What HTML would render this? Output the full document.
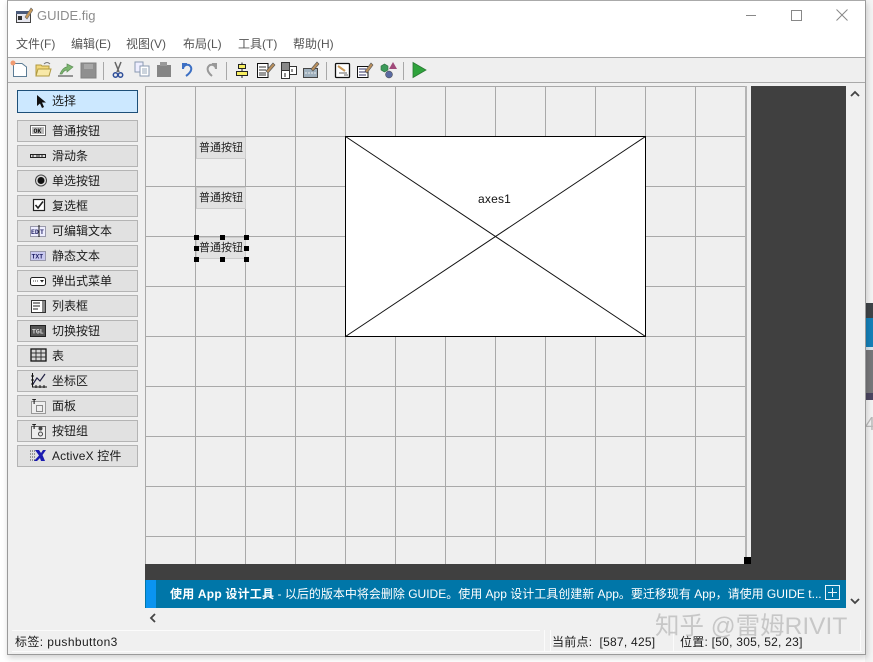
<!DOCTYPE html>
<html><head><meta charset="utf-8">
<style>
html,body{margin:0;padding:0;background:#fff}
body{width:873px;height:662px;position:relative;overflow:hidden;font-family:"Liberation Sans","Noto Sans CJK SC",sans-serif;color:#1c1c1c}
.a{position:absolute}
.t{position:absolute;white-space:nowrap;font-size:12px;line-height:16px}
.btn{position:absolute;left:17px;width:119px;height:20px;background:#e1e1e1;border:1px solid #b4b4b4;font-size:12px;line-height:20px;white-space:nowrap}
.btn span{position:absolute;left:34px;top:0}
.btn svg{position:absolute;left:12px;top:1px}
svg{display:block}
.pb{position:absolute;left:196px;width:48px;height:20px;background:#e2e2e2;border:1px solid #cdcdcd;font-size:11px;line-height:20px;text-align:center;white-space:nowrap;color:#222}
.h{position:absolute;width:5px;height:5px;background:#000}
</style></head><body>
<div class="a" style="left:0;top:0;width:873px;height:662px;background:#fff"></div>
<div class="a" style="left:865px;top:0;width:8px;height:662px;background:#f4f4f4"></div>
<div class="a" style="left:865px;top:303px;width:8px;height:15px;background:#3f4448"></div>
<div class="a" style="left:865px;top:318px;width:8px;height:29px;background:#1580b8"></div>
<div class="a" style="left:865px;top:347px;width:8px;height:3px;background:#d9e6ee"></div>
<div class="a" style="left:865px;top:350px;width:8px;height:43px;background:#77777a"></div>
<div class="a" style="left:865px;top:393px;width:8px;height:7px;background:#4b4560"></div>
<div class="t" style="left:865px;top:414px;font-size:18px;line-height:20px;color:#bbb">4</div>

<!-- window -->
<div class="a" style="left:7px;top:0;width:857px;height:653px;background:#f0f0f0;border:1px solid #9a9a9a;border-top:1px solid #aaa;box-shadow:1px 3px 6px rgba(0,0,0,.18)"></div>
<div class="a" style="left:8px;top:1px;width:857px;height:56px;background:#fff"></div>
<div class="a" style="left:8px;top:57px;width:857px;height:1px;background:#a6a6a6"></div>
<div class="a" style="left:8px;top:58px;width:857px;height:24px;background:#efefef"></div>
<div class="a" style="left:8px;top:82px;width:857px;height:1px;background:#a9a9a9"></div>

<!-- title -->
<svg class="a" style="left:15px;top:7px" width="18" height="16" viewBox="0 0 18 16"><rect x="1.500" y="4.500" width="14" height="11" fill="#e8e8f0" stroke="#444"/><rect x="1" y="4" width="15" height="3" fill="#4a5a7a"/><rect x="3" y="9" width="4" height="4" fill="#333"/><path d="M10 10 16 1 18 3 12 12Z" fill="#c99a5a" stroke="#666" stroke-width=".6"/></svg>
<div class="t" style="left:37px;top:8px;font-size:13px;color:#8c8c8c">GUIDE.fig</div>
<div class="a" style="left:746px;top:15px;width:10px;height:1px;background:#888"></div>
<div class="a" style="left:791px;top:10px;width:9px;height:9px;border:1px solid #888"></div>
<svg class="a" style="left:836px;top:9px" width="12" height="12" viewBox="0 0 12 12"><path d="M.5.5 11.5 11.5M11.5.5.5 11.5" stroke="#888" fill="none"/></svg>

<!-- menu -->
<div class="t" style="left:16px;top:36px;color:#555">文件(F)</div>
<div class="t" style="left:71px;top:36px;color:#555">编辑(E)</div>
<div class="t" style="left:126px;top:36px;color:#555">视图(V)</div>
<div class="t" style="left:183px;top:36px;color:#555">布局(L)</div>
<div class="t" style="left:238px;top:36px;color:#555">工具(T)</div>
<div class="t" style="left:293px;top:36px;color:#555">帮助(H)</div>

<!-- toolbar -->
<svg class="a" style="left:8px;top:58px" width="430" height="24" viewBox="8 58 430 24">
<path d="M13.500 63.500H22L26.500 67V76.500H13.500Z" fill="#fff" stroke="#5b7c95"/>
<circle cx="13" cy="63" r="2.500" fill="#f09a70"/>
<path d="M36 76V65H41L42 66H49V76Z" fill="#f2d77a" stroke="#b09a40"/><path d="M36 76 38 69H51L49 76Z" fill="#f8e9a8" stroke="#b09a40"/><path d="M44 64C46 62 48 62 50 64" fill="none" stroke="#777"/>
<path d="M58 76H73" stroke="#777" stroke-width="1.500"/><path d="M60 74C62 69 65 67 67 67V64L73 67 67 72V70C65 70 63 72 62 74Z" fill="#7cb66f" stroke="#5f8f58" stroke-width=".7"/>
<rect x="81" y="63" width="15" height="15" fill="#8f8f8f" stroke="#808080"/><rect x="84" y="64" width="9" height="5" fill="#a8a8a8"/>
<rect x="103" y="62" width="1" height="18" fill="#a8a8a8"/>
<path d="M115 62 119 72M121 62 117 72" stroke="#666" stroke-width="1.500"/><circle cx="115.500" cy="75" r="2.200" fill="none" stroke="#2f4f9a" stroke-width="1.500"/><circle cx="120.500" cy="75" r="2.200" fill="none" stroke="#2f4f9a" stroke-width="1.500"/>
<rect x="135" y="62" width="8" height="10" fill="#eef" stroke="#8a9ab0"/><rect x="140" y="66" width="9" height="10" fill="#fff" stroke="#8a9ab0"/><path d="M142 69H147M142 71H147M142 73H147" stroke="#9ab"/>
<rect x="157" y="65" width="14" height="12" fill="#858585"/><rect x="160" y="62" width="7" height="4" fill="#999"/>
<path d="M183 69C183 66 186 64 189 65C192 67 193 71 186 76M187 64H183V69" fill="none" stroke="#3d70c4" stroke-width="2"/>
<path d="M216 69C216 66 213 64 210 65C207 67 206 71 212 76M212 64H216V69" fill="none" stroke="#999" stroke-width="2"/>
<rect x="226" y="62" width="1" height="18" fill="#a8a8a8"/>
<path d="M242 62.500V78" stroke="#222"/><rect x="238.500" y="64.500" width="7" height="4" fill="#f7ee60" stroke="#222"/><rect x="236.500" y="71.500" width="11" height="4" fill="#f7ee60" stroke="#222"/>
<path d="M257.500 63.500H268V77.500H257.500Z" fill="#fff" stroke="#111"/><path d="M259 67H266M259 70H266M259 73H266M259 75H266" stroke="#333"/><path d="M266 71 273 63 275 65 268 73Z" fill="#b98f5d" stroke="#555" stroke-width=".6"/>
<rect x="281.500" y="62.500" width="8" height="8" fill="#888" stroke="#333"/><rect x="281.500" y="70.500" width="8" height="8" fill="#fff" stroke="#333"/><rect x="289.500" y="66.500" width="7" height="8" fill="#fff" stroke="#333"/><path d="M285 73V77M292 69V72" stroke="#222"/>
<rect x="303.500" y="68.500" width="14" height="9" fill="#9fb0bd" stroke="#444"/><path d="M305 73H316" stroke="#eee" stroke-dasharray="2 1"/><path d="M311 69 317 62 319 64 313 71Z" fill="#b98f5d" stroke="#555" stroke-width=".6"/>
<rect x="326" y="62" width="1" height="18" fill="#a8a8a8"/>
<rect x="335.500" y="63.500" width="14" height="14" rx="1" fill="#fff" stroke="#111" stroke-width="1.300"/><path d="M338 66 345 71" stroke="#c99a5a" stroke-width="2"/><path d="M339 73H347M344 75H348" stroke="#666"/>
<path d="M357.500 66.500H368V77.500H357.500Z" fill="#fff" stroke="#111"/><path d="M359 69H366M359 72H366M359 75H366" stroke="#336"/><path d="M365 71 371 63 373 65 367 73Z" fill="#b98f5d" stroke="#555" stroke-width=".6"/>
<path d="M381 66 384.500 64 388 66V70L384.500 72 381 70Z" fill="#3c9a5a" stroke="#2a6a3c" stroke-width=".6"/><path d="M393 62 397 69H389Z" fill="#a04a7a"/><circle cx="389" cy="74.500" r="3.500" fill="#5a6aa0" stroke="#444" stroke-width=".5"/>
<rect x="403" y="62" width="1" height="18" fill="#a8a8a8"/>
<path d="M413 62.500 426 70 413 77.500Z" fill="#2fa33c" stroke="#2a7a34" stroke-width=".8"/>
</svg>

<!-- palette -->
<div class="btn" style="top:90px;height:21px;background:#cce8ff;border-color:#1d4f78"><span>选择</span>
<svg style="left:17px;top:3px" width="12" height="15" viewBox="0 0 12 15"><path d="M2 1V12L5 9.500 7 14 9 13 7 8.500H11Z" fill="#111"/></svg></div>

<div class="btn" style="top:120px"><svg width="18" height="18" viewBox="0 0 18 18"><rect x=".5" y="3.500" width="15" height="10" fill="#fff" stroke="#666"/><rect x="2" y="5" width="12" height="7" fill="#bbb"/><text x="3.500" y="11" font-size="6.500" font-family="Liberation Mono" font-weight="bold" fill="#111">OK</text></svg><span>普通按钮</span></div>
<div class="btn" style="top:145px"><svg width="18" height="18" viewBox="0 0 18 18"><rect x=".5" y="7.500" width="15" height="3" fill="#ddd" stroke="#222"/><path d="M3 8V10M7 8V10M9 8V10M12 8V10" stroke="#222"/></svg><span>滑动条</span></div>
<div class="btn" style="top:170px"><svg width="18" height="18" viewBox="0 0 18 18"><circle cx="11" cy="8.500" r="5.500" fill="#ddd" stroke="#444"/><circle cx="11" cy="8.500" r="3.500" fill="#111"/></svg><span>单选按钮</span></div>
<div class="btn" style="top:195px"><svg width="18" height="18" viewBox="0 0 18 18"><rect x="3.500" y="2.500" width="11" height="11" fill="#fff" stroke="#222" stroke-width="1.200"/><path d="M5.500 8 8 11 13 4.500" fill="none" stroke="#222" stroke-width="1.600"/></svg><span>复选框</span></div>
<div class="btn" style="top:220px"><svg width="18" height="18" viewBox="0 0 18 18"><rect x=".5" y="4.500" width="15" height="10" fill="#eef" stroke="#99a"/><text x="1" y="12" font-size="6.500" font-family="Liberation Mono" font-weight="bold" fill="#226">ED</text><text x="10" y="12" font-size="6.500" font-family="Liberation Mono" font-weight="bold" fill="#226">T</text><path d="M9 3V15" stroke="#111"/></svg><span>可编辑文本</span></div>
<div class="btn" style="top:245px"><svg width="18" height="18" viewBox="0 0 18 18"><rect x=".5" y="4.500" width="15" height="9" fill="#c9c9ef" stroke="#99a"/><text x="1.500" y="11.500" font-size="6.500" font-family="Liberation Mono" font-weight="bold" fill="#226">TXT</text></svg><span>静态文本</span></div>
<div class="btn" style="top:270px"><svg width="18" height="18" viewBox="0 0 18 18"><rect x=".5" y="5.500" width="15" height="8" rx="2" fill="#fff" stroke="#222"/><path d="M3 9H8" stroke="#444" stroke-dasharray="1 1"/><path d="M10 8H14L12 10.500Z" fill="#222"/></svg><span>弹出式菜单</span></div>
<div class="btn" style="top:295px"><svg width="18" height="18" viewBox="0 0 18 18"><rect x="1.500" y="3.500" width="14" height="12" fill="#fff" stroke="#333"/><path d="M3 6H10M3 9H10M3 12H8" stroke="#222"/><rect x="12" y="4" width="3" height="11" fill="#888"/></svg><span>列表框</span></div>
<div class="btn" style="top:320px"><svg width="18" height="18" viewBox="0 0 18 18"><rect x=".5" y="3.500" width="15" height="11" fill="#555" stroke="#222"/><text x="2" y="11.500" font-size="6.500" font-family="Liberation Mono" font-weight="bold" fill="#ddd">TGL</text></svg><span>切换按钮</span></div>
<div class="btn" style="top:345px"><svg width="18" height="18" viewBox="0 0 18 18"><rect x="1" y="2" width="15" height="12" fill="#d8d8d8" stroke="#111" stroke-width="1.300"/><path d="M1 6H16M1 10H16M6 2V14M11 2V14" stroke="#333"/></svg><span>表</span></div>
<div class="btn" style="top:370px"><svg width="18" height="18" viewBox="0 0 18 18"><path d="M2.500 1V15H17" fill="none" stroke="#111"/><path d="M1 4H4M1 8H4M1 12H4M6 13V16M10 13V16M14 13V16" stroke="#111"/><path d="M3 12 7 6 10 9 15 2" fill="none" stroke="#224" stroke-width="1.200"/></svg><span>坐标区</span></div>
<div class="btn" style="top:395px"><svg width="18" height="18" viewBox="0 0 18 18"><rect x="1.500" y="4.500" width="14" height="12" fill="#eee" stroke="#999"/><text x="2" y="7" font-size="7" font-family="Liberation Mono" font-weight="bold" fill="#111">T</text><rect x="6.500" y="8.500" width="6" height="6" fill="none" stroke="#888"/></svg><span>面板</span></div>
<div class="btn" style="top:420px"><svg width="18" height="18" viewBox="0 0 18 18"><rect x="1.500" y="4.500" width="14" height="12" fill="#eee" stroke="#666"/><text x="2" y="7" font-size="7" font-family="Liberation Mono" font-weight="bold" fill="#111">T</text><circle cx="10.500" cy="6.500" r="2" fill="#444"/><circle cx="10.500" cy="12" r="2" fill="none" stroke="#444"/></svg><span>按钮组</span></div>
<div class="btn" style="top:445px"><svg width="18" height="18" viewBox="0 0 18 18"><path d="M0 4H5M0 7H5M0 10H5M0 13H5" stroke="#444" stroke-dasharray="1 1"/><path d="M5 3H9L11 6 13 3H16L12.500 8 15 14H11L10 11 7 14H4L9 8.500Z" fill="#1a1ab0"/></svg><span style="letter-spacing:.15px">ActiveX 控件</span></div>

<!-- canvas -->
<svg class="a" style="left:145px;top:86px" width="606" height="478" viewBox="145 86 606 478">
<rect x="145" y="86" width="606" height="478" fill="#efefef"/>
<g stroke="#a9a9a9" stroke-width="1">
<path d="M145.500 86V564M195.500 86V564M245.500 86V564M295.500 86V564M345.500 86V564M395.500 86V564M445.500 86V564M495.500 86V564M545.500 86V564M595.500 86V564M645.500 86V564M695.500 86V564"/>
<path d="M145 86.500H745M145 136.500H745M145 186.500H745M145 236.500H745M145 286.500H745M145 336.500H745M145 386.500H745M145 436.500H745M145 486.500H745M145 536.500H745"/>
</g>
<rect x="745" y="86" width="2" height="472" fill="#b4b4b4"/>
<rect x="747" y="86" width="4" height="478" fill="#efefef"/>
<rect x="345.500" y="136.500" width="300" height="200" fill="#fff" stroke="#000"/>
<path d="M345.500 136.500 645.500 336.500M645.500 136.500 345.500 336.500" stroke="#111" fill="none"/>
<text x="478" y="203" font-size="12" font-family="Liberation Sans" fill="#111" letter-spacing=".2">axes1</text>
</svg>
<div class="a" style="left:751px;top:86px;width:95px;height:494px;background:#404040"></div>
<div class="a" style="left:145px;top:564px;width:701px;height:16px;background:#404040"></div>
<div class="a" style="left:744px;top:557px;width:7px;height:7px;background:#000"></div>

<div class="pb" style="top:137px">普通按钮</div>
<div class="pb" style="top:187px">普通按钮</div>
<div class="pb" style="top:237px">普通按钮</div>
<div class="h" style="left:194px;top:235px"></div><div class="h" style="left:220px;top:235px"></div><div class="h" style="left:244px;top:235px"></div>
<div class="h" style="left:194px;top:246px"></div><div class="h" style="left:244px;top:246px"></div>
<div class="h" style="left:194px;top:257px"></div><div class="h" style="left:220px;top:257px"></div><div class="h" style="left:244px;top:257px"></div>

<!-- banner -->
<div class="a" style="left:145px;top:580px;width:701px;height:28px;background:#0076a8"></div>
<div class="a" style="left:146px;top:580px;width:10px;height:28px;background:#0a94f0"></div>
<div class="t" style="left:170px;top:586px;color:#fff;font-size:12px"><b style="letter-spacing:.2px">使用 App 设计工具</b> - 以后的版本中将会删除 GUIDE。使用 App 设计工具创建新 App。要迁移现有 App，请使用 GUIDE t...</div>
<svg class="a" style="left:825px;top:585px" width="15" height="15" viewBox="0 0 15 15"><rect x=".5" y=".5" width="14" height="14" fill="none" stroke="#e8f4fa"/><path d="M7.500 3V12M3 7.500H12" stroke="#e8f4fa"/></svg>

<!-- scroll arrows -->
<svg class="a" style="left:850px;top:90px" width="10" height="8" viewBox="0 0 10 8"><path d="M1 6 5 2 9 6" fill="none" stroke="#444" stroke-width="1.800"/></svg>
<svg class="a" style="left:850px;top:597px" width="10" height="8" viewBox="0 0 10 8"><path d="M1 2 5 6 9 2" fill="none" stroke="#444" stroke-width="1.800"/></svg>
<svg class="a" style="left:149px;top:613px" width="8" height="10" viewBox="0 0 8 10"><path d="M6 1 2 5 6 9" fill="none" stroke="#444" stroke-width="1.800"/></svg>

<!-- status -->
<div class="a" style="left:12px;top:630px;width:528px;height:1px;background:#fbfbfb"></div>
<div class="a" style="left:12px;top:651px;width:850px;height:1px;background:#fbfbfb"></div>
<div class="a" style="left:544px;top:630px;width:1px;height:22px;background:#fbfbfb"></div>
<div class="a" style="left:550px;top:630px;width:1px;height:22px;background:#fbfbfb"></div>
<div class="a" style="left:673px;top:630px;width:1px;height:22px;background:#fbfbfb"></div>
<div class="a" style="left:860px;top:630px;width:1px;height:22px;background:#fbfbfb"></div>
<div class="t" style="left:15px;top:634px;font-size:12px;letter-spacing:.4px">标签: pushbutton3</div>
<div class="t" style="left:552px;top:634px;font-size:12px;letter-spacing:.25px">当前点:&nbsp; [587, 425]</div>
<div class="t" style="left:680px;top:634px;font-size:12px;letter-spacing:.25px">位置: [50, 305, 52, 23]</div>
<div class="t" style="left:655px;top:610px;font-size:24.500px;line-height:34px;color:rgba(185,185,185,.75)">知乎 @雷姆RIVIT</div>
</body></html>
